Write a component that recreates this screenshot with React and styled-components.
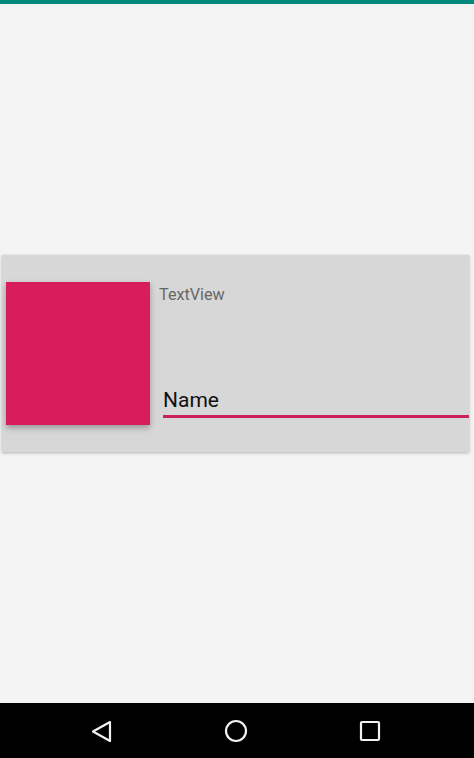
import React from "react";
import styled, { createGlobalStyle } from "styled-components";

const Global = createGlobalStyle`
  html, body { margin: 0; padding: 0; background: #f4f4f4; }
  body { font-family: Roboto, "Noto Sans", sans-serif; }
`;

const Screen = styled.div`
  width: 474px;
  height: 758px;
  display: flex;
  flex-direction: column;
  overflow: hidden;
`;

const StatusBar = styled.div`
  height: 4px;
  flex: none;
  background: #00897b;
`;

const Content = styled.main`
  flex: 1;
  background: #f4f4f4;
  padding: 251px 5px 0 2px;
`;

const Card = styled.section`
  height: 197px;
  box-sizing: border-box;
  background: #d7d7d7;
  box-shadow: 0 1px 3px rgba(0, 0, 0, 0.28);
  padding: 27px 0 0 4px;
  display: flex;
  align-items: flex-start;
  gap: 9px;
`;

const Swatch = styled.div`
  width: 144px;
  height: 143px;
  flex: none;
  background: #d91c5c;
  box-shadow: 0 3px 6px rgba(0, 0, 0, 0.3);
`;

const Details = styled.div`
  flex: 1;
  height: 143px;
  display: flex;
  flex-direction: column;
  justify-content: space-between;
`;

const Label = styled.div`
  font-size: 16.2px;
  line-height: 24px;
  padding-top: 1px;
  color: #666666;
`;

const Field = styled.div`
  margin-left: 4px;
  padding-bottom: 2px;
  border-bottom: 3px solid #cb215a;
  margin-bottom: 7px;
  font-size: 21px;
  line-height: 25px;
  color: #111111;
`;

const NavBar = styled.nav`
  height: 55px;
  flex: none;
  background: #000;
  padding-right: 2px;
  display: grid;
  grid-template-columns: 134px 134px 134px;
  justify-content: center;
  align-items: center;
  justify-items: center;
  color: #f2f2f2;
`;

const NavIcon = styled.svg`
  width: 24px;
  height: 24px;
  fill: none;
  stroke: currentColor;
  stroke-width: 2.2;
  stroke-linejoin: round;
  display: block;
`;

export default function App() {
  return (
    <Screen>
      <Global />
      <StatusBar />
      <Content>
        <Card>
          <Swatch />
          <Details>
            <Label>TextView</Label>
            <Field>Name</Field>
          </Details>
        </Card>
      </Content>
      <NavBar>
        <NavIcon viewBox="0 0 24 24"><path d="M20 3 L3 12.5 L20 22 Z" /></NavIcon>
        <NavIcon viewBox="0 0 24 24"><circle cx="12" cy="12" r="10" /></NavIcon>
        <NavIcon viewBox="0 0 24 24"><rect x="3" y="3" width="18" height="18" rx="1" /></NavIcon>
      </NavBar>
    </Screen>
  );
}
